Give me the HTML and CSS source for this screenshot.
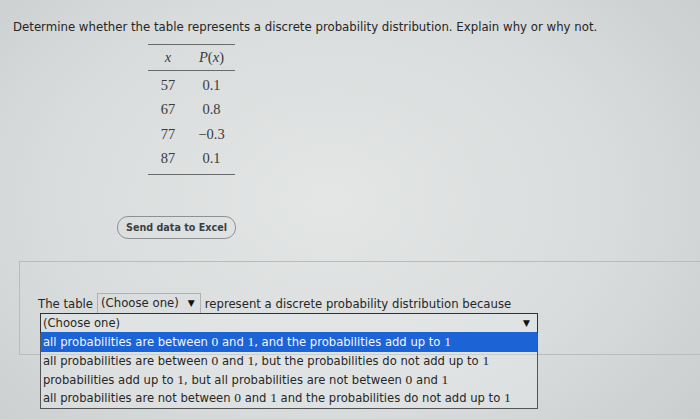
FILE: index.html
```html
<!DOCTYPE html>
<html>
<head>
<meta charset="utf-8">
<link rel="stylesheet" href="styles.css">
</head>
<body>
<div class="page">
  <p class="question">Determine whether the table represents a discrete probability distribution. Explain why or why not.</p>
  <table class="prob">
    <thead>
      <tr><th><i>x</i></th><th><i>P</i>(<i>x</i>)</th></tr>
    </thead>
    <tbody>
      <tr><td>57</td><td>0.1</td></tr>
      <tr><td>67</td><td>0.8</td></tr>
      <tr><td>77</td><td>&minus;0.3</td></tr>
      <tr><td>87</td><td>0.1</td></tr>
    </tbody>
  </table>
  <div class="btn-row"><span class="btn">Send data to Excel</span></div>
  <div class="answer">
    <div class="sentence">
      <span>The table</span>
      <span class="select">(Choose one)<span class="arrow">&#9660;</span></span>
      <span>represent a discrete probability distribution because</span>
    </div>
    <div class="dropdown">
      <div class="dd-head"><span>(Choose one)</span><span class="arrow">&#9660;</span></div>
      <div class="opt sel">all probabilities are between <span class="m">0</span> and <span class="m">1</span>, and the probabilities add up to <span class="m">1</span></div>
      <div class="opt">all probabilities are between <span class="m">0</span> and <span class="m">1</span>, but the probabilities do not add up to <span class="m">1</span></div>
      <div class="opt">probabilities add up to <span class="m">1</span>, but all probabilities are not between <span class="m">0</span> and <span class="m">1</span></div>
      <div class="opt">all probabilities are not between <span class="m">0</span> and <span class="m">1</span> and the probabilities do not add up to <span class="m">1</span></div>
    </div>
  </div>
</div>
</body>
</html>
```
FILE: styles.css
```css
html, body {
  margin: 0;
  padding: 0;
}
body {
  width: 700px;
  height: 419px;
  overflow: hidden;
  font-family: "DejaVu Sans", Verdana, sans-serif;
  color: #262626;
  background:
    radial-gradient(ellipse 520px 380px at 330px 200px, #e4e6e6 0%, #d9dcdc 55%, #c6caca 100%);
}
.page {
  position: relative;
  height: 419px;
  padding-top: 19px;
  box-sizing: border-box;
}
.question {
  margin: 0 0 0 13px;
  font-size: 11.75px;
  line-height: 16px;
}
.prob {
  margin: 9px 0 0 148px;
  border-collapse: collapse;
  font-family: "Liberation Serif", "Times New Roman", serif;
  font-size: 14.5px;
  color: #3a3a3a;
  border-top: 1px solid #6a6a6a;
  border-bottom: 1px solid #6a6a6a;
}
.prob th {
  font-weight: normal;
  height: 25px;
  padding: 0;
  border-bottom: 1px solid #6a6a6a;
}
.prob th:first-child, .prob td:first-child { width: 40px; text-align: center; }
.prob th:last-child, .prob td:last-child { width: 47px; text-align: center; }
.prob td {
  height: 24.5px;
  padding: 0;
}
.prob tbody tr:first-child td { padding-top: 2px; }
.prob tbody tr:last-child td { padding-bottom: 3px; }
.btn-row {
  margin: 41px 0 0 117px;
}
.btn {
  display: inline-block;
  font-size: 9.6px;
  font-weight: bold;
  color: #3a3f44;
  border: 1px solid #8d9194;
  border-radius: 11px;
  padding: 5px 8px 4px;
  line-height: 12px;
}
.answer {
  margin: 22px 0 0 19px;
  width: 700px;
  height: 92px;
  border: 1px solid #b9bcbc;
  border-right: none;
  position: relative;
}
.sentence {
  margin: 31px 0 0 18px;
  display: flex;
  align-items: center;
  gap: 4px;
  font-size: 11.7px;
}
.select {
  display: inline-flex;
  align-items: center;
  gap: 9px;
  border: 1px solid #b0b0b0;
  padding: 2px 5px 3px 3px;
}
.arrow {
  font-size: 9px;
  color: #111;
}
.dropdown {
  position: absolute;
  left: 20px;
  top: 51px;
  width: 496px;
  border: 1px solid #555;
  font-size: 11.6px;
  background: rgba(236,238,238,0.35);
}
.dd-head {
  display: flex;
  justify-content: space-between;
  align-items: center;
  height: 18px;
  padding: 0 7px 0 2px;
  border: 1px solid #333;
  margin: -1px;
}
.opt {
  height: 18.5px;
  line-height: 18.5px;
  padding-left: 2px;
  white-space: nowrap;
}
.opt.sel {
  background: #1c63d6;
  color: #f4f6fb;
  height: 20px;
  line-height: 20px;
}
.m {
  font-family: "Liberation Serif", "Times New Roman", serif;
  font-size: 13.5px;
}
```
